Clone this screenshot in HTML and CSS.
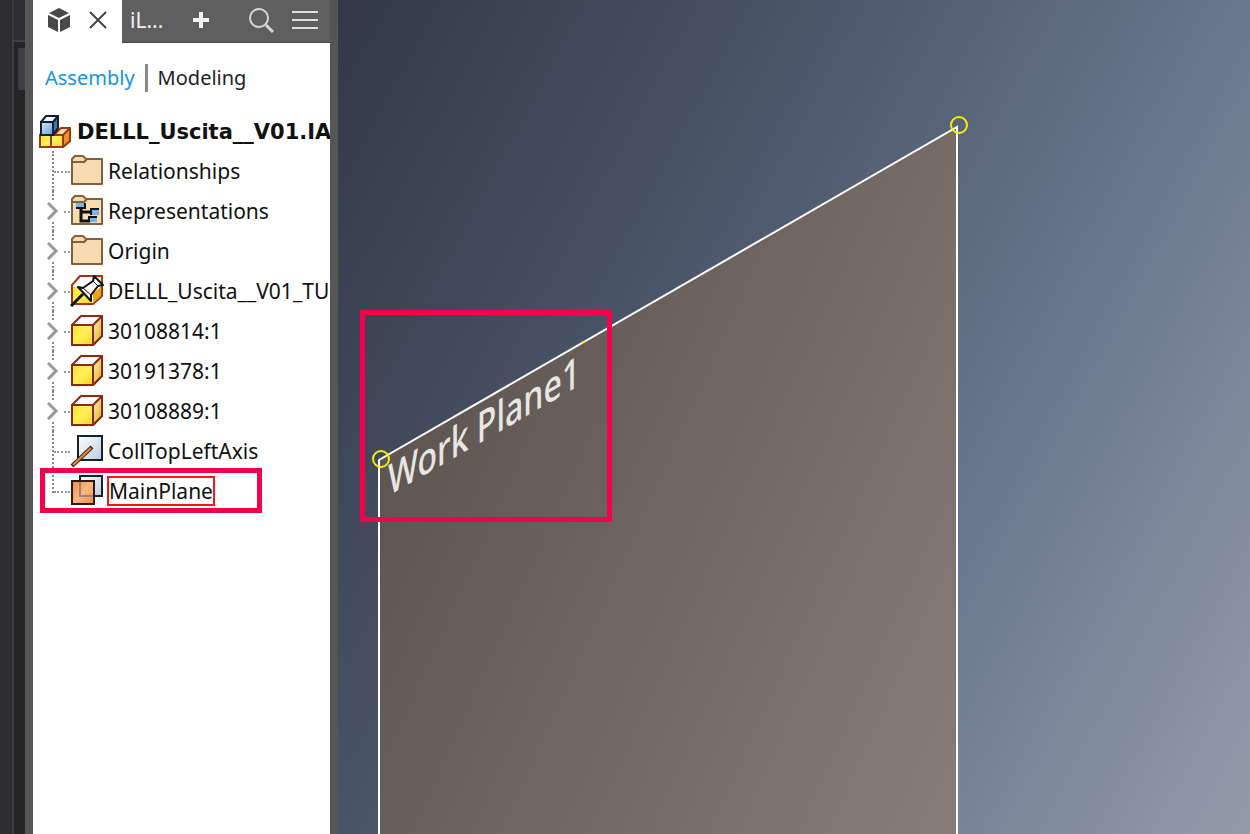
FILE: index.html
```html
<!DOCTYPE html>
<html lang="en">
<head>
<meta charset="utf-8">
<title>Model browser</title>
<link rel="stylesheet" href="styles.css">
</head>
<body>
<svg class="defs" width="0" height="0" aria-hidden="true">
  <defs>
    <linearGradient id="gold" x1="0" y1="0" x2="1" y2="1"><stop offset="0" stop-color="#ffe030"/><stop offset=".5" stop-color="#fff25a"/><stop offset="1" stop-color="#f8d020"/></linearGradient>
    <linearGradient id="side" x1="0" y1="0" x2="1" y2="1"><stop offset="0" stop-color="#fff6c0"/><stop offset="1" stop-color="#e0a818"/></linearGradient>
    <linearGradient id="pale" x1="0" y1="0" x2="1" y2="1"><stop offset="0" stop-color="#ffffff"/><stop offset="1" stop-color="#b9cde4"/></linearGradient>
    <linearGradient id="blue" x1="0" y1="0" x2="1" y2="1"><stop offset="0" stop-color="#d8e9fa"/><stop offset="1" stop-color="#5d9ee0"/></linearGradient>
    <linearGradient id="orange" x1="0" y1="0" x2="1" y2="1"><stop offset="0" stop-color="#f08a3c"/><stop offset=".5" stop-color="#f9b884"/><stop offset="1" stop-color="#ee8a40"/></linearGradient>
    <symbol id="folder" viewBox="0 0 34 32">
      <path d="M2 29V4l3-3h8l3 3h16v25z" fill="#f6dcae" stroke="#806040" stroke-width="2" stroke-linejoin="round"/>
      <path d="M3 7h11l3-3" fill="none" stroke="#806040" stroke-width="2"/>
    </symbol>
    <symbol id="cube" viewBox="0 0 34 32">
      <path d="M2 10 11 1h21v20l-9 9H2z" fill="#fff" stroke="#8a2a10" stroke-width="2" stroke-linejoin="round"/>
      <path d="M23 10 32 1v20l-9 9z" fill="url(#side)" stroke="#8a2a10" stroke-width="2" stroke-linejoin="round"/>
      <path d="M2 10h21v20H2z" fill="url(#gold)" stroke="#8a2a10" stroke-width="2"/>
    </symbol>
    <symbol id="chevron" viewBox="0 0 14 18">
      <path d="m3 1 8 8-8 8" fill="none" stroke="#999" stroke-width="3"/>
    </symbol>
  </defs>
</svg>
<div class="app">
  <aside class="rail"><div class="rail-side"></div><div class="rail-main"><div class="rail-top"></div><div class="rail-tab"></div></div></aside>
  <section class="panel">
    <header class="tabs">
      <div class="tab-active">
        <button class="icon-btn" aria-label="Model"><svg width="24" height="26" viewBox="0 0 24 26"><path d="M12 1 22 6 12 11 2 6zM1 8l10 5v12L1 20zM23 8l-10 5v12l10-5z" fill="#484848"/></svg></button>
        <button class="icon-btn" aria-label="Close"><svg width="18" height="18" viewBox="0 0 18 18"><path d="M1 1 17 17M17 1 1 17" stroke="#444" stroke-width="2"/></svg></button>
      </div>
      <div class="tab-rest">
        <button class="tab-text">iL...</button>
        <button class="icon-btn" aria-label="Add"><svg width="16" height="16" viewBox="0 0 16 16"><path d="M8 0v16M0 8h16" stroke="#f2f2f2" stroke-width="4"/></svg></button>
        <button class="icon-btn search" aria-label="Search"><svg width="26" height="26" viewBox="0 0 26 26"><circle cx="11" cy="11" r="9" fill="none" stroke="#d6d6d6" stroke-width="2"/><path d="m18 18 7 7" stroke="#d6d6d6" stroke-width="3"/></svg></button>
        <button class="icon-btn" aria-label="Menu"><svg width="26" height="20" viewBox="0 0 26 20"><path d="M0 2h26M0 10h26M0 18h26" stroke="#dedede" stroke-width="2"/></svg></button>
      </div>
    </header>
    <nav class="modes"><a class="on" href="#">Assembly</a><span class="bar"></span><a href="#">Modeling</a></nav>
    <div class="root">
      <svg width="32" height="34" viewBox="0 0 32 34"><path d="M15 20 22 13h9v13l-7 6H15z" fill="#fbe0b0" stroke="#9a3a10" stroke-width="2" stroke-linejoin="round"/><path d="M24 20l7-7v13l-7 6z" fill="#f0902c" stroke="#9a3a10" stroke-width="2" stroke-linejoin="round"/><path d="M1 20h23v12H1z" fill="url(#gold)" stroke="#9a3a10" stroke-width="2"/><path d="M12 20v12" stroke="#9a3a10" stroke-width="2"/><path d="M2 7 7 1h12v12l-5 7H2z" fill="#f4f8fc" stroke="#14202c" stroke-width="2" stroke-linejoin="round"/><path d="M14 7 19 1v12l-5 7z" fill="#3a78b4" stroke="#14202c" stroke-width="2" stroke-linejoin="round"/><path d="M2 7h12v13H2z" fill="url(#blue)" stroke="#14202c" stroke-width="2"/></svg>
      <strong>DELLL_Uscita__V01.IA</strong>
    </div>
    <ul class="tree">
      <li class="leaf"><span class="branch"></span><svg class="ico"><use href="#folder"/></svg><span>Relationships</span></li>
      <li><button class="branch" aria-label="Expand"><svg class="chev"><use href="#chevron"/></svg></button><svg class="ico" viewBox="0 0 34 32"><use href="#folder" width="34" height="32"/><path d="M11 12v14h9M11 17h12" fill="none" stroke="#111" stroke-width="3"/><path d="M6 8h9v5H6zM21 14h8v6h-8zM19 22h8v5h-8z" fill="#78b4ec"/><path d="M6 13h9V8M21 20v-6h8M19 27v-5h8" fill="none" stroke="#111" stroke-width="2"/></svg><span>Representations</span></li>
      <li><button class="branch" aria-label="Expand"><svg class="chev"><use href="#chevron"/></svg></button><svg class="ico"><use href="#folder"/></svg><span>Origin</span></li>
      <li><button class="branch" aria-label="Expand"><svg class="chev"><use href="#chevron"/></svg></button><svg class="ico" viewBox="0 0 34 32"><path d="M2 10 10 1h22v20l-9 8H2z" fill="#fff" stroke="#a83414" stroke-width="2" stroke-linejoin="round"/><path d="M3 12h19v16H3z" fill="url(#gold)"/><path d="M23 18 31 12v9l-8 7z" fill="#e0a818"/><path d="m1 31 12-12" stroke="#111" stroke-width="3"/><path d="m8 12 5 1 10-7 1-5 9 9-5 1-7 9v6z" fill="#fff" stroke="#111" stroke-width="2" stroke-linejoin="round"/><path d="m13 13 8 7M23 6l5 5" stroke="#111"/></svg><span>DELLL_Uscita__V01_TU</span></li>
      <li><button class="branch" aria-label="Expand"><svg class="chev"><use href="#chevron"/></svg></button><svg class="ico"><use href="#cube"/></svg><span>30108814:1</span></li>
      <li><button class="branch" aria-label="Expand"><svg class="chev"><use href="#chevron"/></svg></button><svg class="ico"><use href="#cube"/></svg><span>30191378:1</span></li>
      <li><button class="branch" aria-label="Expand"><svg class="chev"><use href="#chevron"/></svg></button><svg class="ico"><use href="#cube"/></svg><span>30108889:1</span></li>
      <li class="leaf"><span class="branch"></span><svg class="ico" viewBox="0 0 34 32"><path d="M8 1h24v24H8z" fill="url(#pale)" stroke="#17212b" stroke-width="2"/><path d="M2 31 22 12" stroke="#3a2010" stroke-width="4"/><path d="M3 30 21 13" stroke="#f08c3c" stroke-width="2"/></svg><span>CollTopLeftAxis</span></li>
      <li class="leaf last"><span class="branch"></span><svg class="ico" viewBox="0 0 34 32"><path d="M10 1h22v20H10z" fill="url(#pale)" stroke="#17212b" stroke-width="2"/><path d="M2 6h22v23H2z" fill="url(#orange)" stroke="#2c1a10" stroke-width="2"/><path d="M10 7v14h13" fill="none" stroke="#a08078" stroke-width="2"/></svg><span class="picked">MainPlane</span></li>
    </ul>
    <div class="mark mark-row"></div>
  </section>
  <main class="view">
    <svg class="scene" viewBox="0 0 912 834" preserveAspectRatio="xMinYMin slice" role="img" aria-label="Work plane in the model view">
      <defs><linearGradient id="plane" gradientUnits="userSpaceOnUse" x1="42" y1="500" x2="620" y2="760"><stop offset="0" stop-color="#5f5651"/><stop offset="1" stop-color="#857b78"/></linearGradient></defs>
      <path d="M41 460 619 127V840H41z" fill="url(#plane)"/>
      <path d="M41 840V460L619 127V840" fill="none" stroke="#fff" stroke-width="2"/>
      <circle cx="43" cy="459" r="8" fill="none" stroke="#f4f000" stroke-width="2"/>
      <circle cx="621" cy="125" r="8" fill="none" stroke="#f4f000" stroke-width="2"/>
      <path d="M244 342h3" stroke="#f4f000" stroke-width="2"/>
      <text class="plane-name" transform="translate(50 496) rotate(-30) skewX(-30)">Work Plane1</text>
    </svg>
    <div class="mark mark-plane"></div>
  </main>
</div>
</body>
</html>
```
FILE: styles.css
```css
* { box-sizing: border-box; }
body { margin: 0; font: 21px/40px "Noto Sans", "Open Sans", sans-serif; color: #111; }
button { margin: 0; padding: 0; border: 0; background: none; font: inherit; color: inherit; }
svg { display: block; flex: none; }
.defs { position: absolute; }
.app { display: flex; height: 100vh; overflow: hidden; }
.rail { display: flex; flex: none; width: 25px; background: #252526; }
.rail-side { width: 14px; background: #2d2d30; border-right: 2px solid #3b3b44; }
.rail-main { flex: 1; }
.rail-top { height: 42px; background: #2d2d33; border-bottom: 2px solid #3f3f46; }
.rail-tab { height: 42px; margin: 6px 0 0 4px; background: #3f3f48; }
.panel { position: relative; flex: none; width: 313px; overflow: hidden; background: #fff; border: solid #555; border-width: 0 8px; }
.tabs { display: flex; height: 43px; background: #5f5f5f; }
.tab-active { display: flex; flex: none; align-items: center; gap: 18px; width: 89px; padding: 0 0 4px 14px; background: #fff; }
.tab-rest { display: flex; flex: 1; align-items: center; gap: 18px; padding: 0 12px 2px 8px; border-bottom: 1px solid #444; }
.tab-text { margin-right: 12px; color: #f2f2f2; line-height: 30px; }
.search { margin-left: auto; }
.modes { display: flex; align-items: center; gap: 10px; height: 69px; padding-left: 12px; font-size: 20px; }
.modes a { color: #222; text-decoration: none; }
.modes .on { color: #1296dc; }
.bar { width: 3px; height: 28px; background: #888; }
.root { display: flex; align-items: center; gap: 6px; height: 39px; padding-left: 6px; font-family: "DejaVu Sans", sans-serif; white-space: nowrap; }
.tree { margin: 0; padding: 0; list-style: none; }
.tree li { display: flex; align-items: center; height: 40px; padding-left: 12px; white-space: nowrap; }
.branch { position: relative; flex: none; display: flex; align-items: center; width: 25px; height: 40px; }
.chev { position: relative; width: 14px; height: 18px; background: #fff; }
.branch::before { content: ""; position: absolute; left: 7px; top: 0; bottom: 0; border-left: 2px dotted #888; }
.branch::after { content: ""; position: absolute; left: 19px; right: 0; top: 20px; border-top: 2px dotted #999; }
.leaf .branch::after { left: 9px; }
.last .branch::before { bottom: 18px; }
.ico { width: 34px; height: 32px; margin-right: 4px; }
.picked { height: 30px; margin-left: -1px; line-height: 26px; border: 2px solid #f01820; }
.mark { position: absolute; border: 5px solid #f5004a; }
.mark-row { left: 7px; top: 468px; width: 222px; height: 45px; }
.mark-plane { left: 22px; top: 310px; width: 252px; height: 212px; }
.view { position: relative; flex: 1; min-width: 0; background: linear-gradient(118deg, #323845 0%, #495366 33%, #69768d 67%, #949cab 100%); }
.scene { width: 100%; height: 100%; }
.plane-name { font-size: 37px; font-weight: 500; fill: #e8e6e4; }
```
